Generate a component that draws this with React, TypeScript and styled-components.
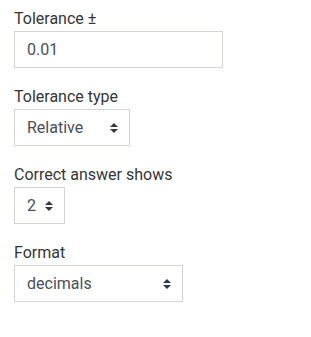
import React from "react";
import styled, { createGlobalStyle } from "styled-components";

const GlobalStyle = createGlobalStyle`
  html, body {
    margin: 0;
    padding: 0;
    background: #ffffff;
  }
  body {
    font-family: Roboto, "Liberation Sans", sans-serif;
    font-size: 16px;
    color: #373a3c;
  }
`;

const Form = styled.div`
  display: flex;
  flex-direction: column;
  align-items: flex-start;
  padding: 9px 14px;
`;

const Group = styled.div`
  display: flex;
  flex-direction: column;
  align-items: flex-start;
  margin-bottom: 19px;
`;

const Label = styled.label`
  font-size: 16px;
  line-height: 20px;
  margin-bottom: 2px;
  color: #343638;
`;

const TextInput = styled.input`
  box-sizing: border-box;
  width: 209px;
  height: 37px;
  padding: 6px 12px;
  border: 1px solid #ced4da;
  border-radius: 0;
  font-family: Roboto, "Liberation Sans", sans-serif;
  font-size: 16px;
  color: #495057;
  background: #fff;
  outline: none;
`;

const SelectWrap = styled.div`
  position: relative;
  display: inline-flex;
`;

const Select = styled.select`
  box-sizing: border-box;
  height: 37px;
  padding: 6px 28px 6px 12px;
  border: 1px solid #ced4da;
  border-radius: 0;
  appearance: none;
  -webkit-appearance: none;
  font-family: Roboto, "Liberation Sans", sans-serif;
  font-size: 16px;
  color: #495057;
  background: #fff;
  outline: none;
`;

const Arrow = styled.svg`
  position: absolute;
  right: 12px;
  top: 50%;
  margin-top: -5px;
  width: 8px;
  height: 10px;
  pointer-events: none;
`;

function Chevrons() {
  return (
    <Arrow viewBox="0 0 4 5">
      <path d="M2 0L0 2h4zm0 5L0 3h4z" fill="#343a40" />
    </Arrow>
  );
}

function Dropdown({ value, options }: { value: string; options: string[] }) {
  return (
    <SelectWrap>
      <Select defaultValue={value}>
        {options.map((o) => (
          <option key={o} value={o}>
            {o}
          </option>
        ))}
      </Select>
      <Chevrons />
    </SelectWrap>
  );
}

export default function App() {
  return (
    <>
      <GlobalStyle />
      <Form>
        <Group>
          <Label>Tolerance ±</Label>
          <TextInput defaultValue="0.01" />
        </Group>
        <Group>
          <Label>Tolerance type</Label>
          <Dropdown value="Relative" options={["Relative", "Nominal", "Geometric"]} />
        </Group>
        <Group>
          <Label>Correct answer shows</Label>
          <Dropdown
            value="2"
            options={["0", "1", "2", "3", "4", "5", "6", "7", "8", "9"]}
          />
        </Group>
        <Group>
          <Label>Format</Label>
          <Dropdown value="decimals" options={["decimals", "significant figures"]} />
        </Group>
      </Form>
    </>
  );
}
